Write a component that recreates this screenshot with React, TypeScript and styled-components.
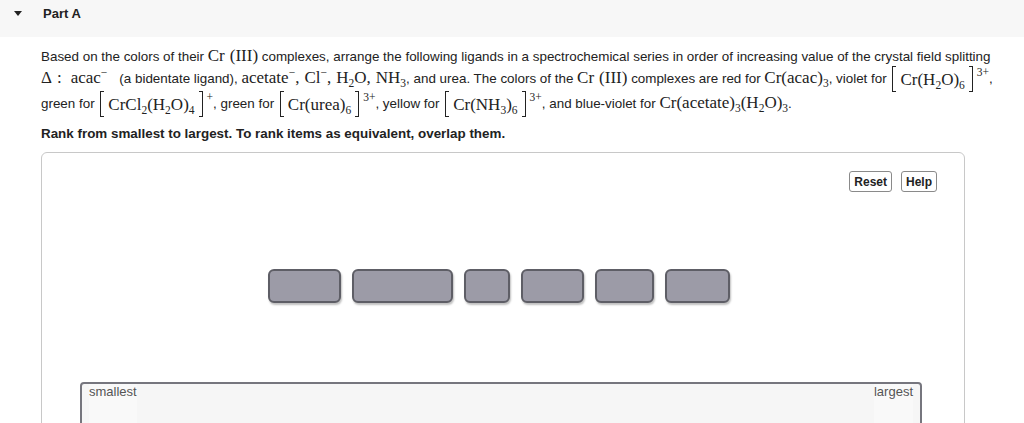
import styled, { createGlobalStyle } from 'styled-components';

const GlobalStyle = createGlobalStyle`
  body {
    margin: 0;
    background: #fff;
    font-family: "Liberation Sans", Arial, sans-serif;
    color: #222;
  }
`;

const Page = styled.div`
  width: 1024px;
  height: 423px;
  overflow: hidden;
`;

const PartHeader = styled.div`
  height: 37px;
  background: #f7f7f7;
  display: flex;
  align-items: center;
  padding-left: 14px;
  padding-bottom: 10px;
  box-sizing: border-box;
`;

const Caret = styled.span`
  width: 0;
  height: 0;
  border-left: 4px solid transparent;
  border-right: 4px solid transparent;
  border-top: 5px solid #222;
  margin-right: 21px;
`;

const PartTitle = styled.span`
  font-weight: bold;
  font-size: 13px;
`;

const Body = styled.div`
  padding: 9px 0 0 41px;
`;

const Prompt = styled.div`
  font-size: 13.4px;
`;

const Line = styled.div<{ $h: number }>`
  white-space: nowrap;
  height: ${(p) => p.$h}px;
  line-height: ${(p) => p.$h}px;
`;

const Math = styled.span`
  font-family: "Liberation Serif", "Times New Roman", serif;
  font-size: 17px;
`;

const Gap = styled.span<{ $w?: number }>`
  display: inline-block;
  width: ${(p) => p.$w ?? 5}px;
`;

const Sub = styled.span`
  font-size: 11.5px;
  position: relative;
  top: 4px;
`;

const Sup = styled.span`
  font-size: 11.5px;
  position: relative;
  top: -7px;
`;

const Formula = styled.span`
  display: inline-flex;
  align-items: center;
  vertical-align: middle;
  line-height: 1;
  height: 25px;
`;

const BigSup = styled.span`
  font-size: 11.5px;
  align-self: flex-start;
  margin-top: 0;
  margin-left: 2px;
`;

const Bracket = styled.span<{ $side: 'left' | 'right' }>`
  display: inline-block;
  width: 3px;
  height: 24px;
  border: 1px solid #222;
  ${(p) =>
    p.$side === 'left'
      ? 'border-right: none; margin: 0 4px 0 2px;'
      : 'border-left: none; margin: 0 2px 0 4px;'}
`;

const Instruction = styled.div`
  font-weight: bold;
  font-size: 13.4px;
  margin-top: 10px;
`;

const Board = styled.div`
  margin-top: 11px;
  width: 924px;
  height: 300px;
  border: 1px solid #c8c8c8;
  border-radius: 6px;
  box-sizing: border-box;
  padding: 18px 27px 0 38px;
`;

const Toolbar = styled.div`
  display: flex;
  justify-content: flex-end;
  gap: 9px;
`;

const ToolButton = styled.button`
  font-family: "Liberation Sans", Arial, sans-serif;
  font-weight: bold;
  font-size: 12px;
  color: #222;
  background: #fff;
  border: 1px solid #8a8a8a;
  border-radius: 3px;
  height: 21px;
  padding: 0 4px;
`;

const Pool = styled.div`
  display: flex;
  justify-content: center;
  gap: 11px;
  margin-top: 77px;
  padding-right: 19px;
`;

const Tile = styled.div<{ $w: number }>`
  width: ${(p) => p.$w}px;
  height: 34px;
  box-sizing: border-box;
  background: #9c9ba7;
  border: 2px solid #5e5e66;
  border-radius: 6px;
  box-shadow: 1px 2px 2px rgba(0, 0, 0, 0.25);
`;

const RankArea = styled.div`
  margin-top: 79px;
  width: 842px;
  height: 60px;
  box-sizing: border-box;
  background: #f6f6f6;
  border: 2px solid #76767e;
  border-radius: 4px;
  display: flex;
  justify-content: space-between;
  padding: 0 7px;
`;

const RankLabel = styled.span`
  font-size: 13px;
  color: #555;
  line-height: 16px;
  background: #f9f9f9;
`;

const tiles = [73, 101, 46, 63, 59, 65];

function Complex({
  inner,
  charge,
}: {
  inner: React.ReactNode;
  charge: string;
}) {
  return (
    <Math>
      <Formula>
        <Bracket $side="left" />
        <span>{inner}</span>
        <Bracket $side="right" />
        <BigSup>{charge}</BigSup>
      </Formula>
    </Math>
  );
}

export default function App() {
  return (
    <Page>
      <GlobalStyle />
      <PartHeader>
        <Caret />
        <PartTitle>Part A</PartTitle>
      </PartHeader>
      <Body>
        <Prompt>
          <Line $h={20}>
            Based on the colors of their{' '}
            <Math>
              Cr<Gap />(III)
            </Math>{' '}
            complexes, arrange the following ligands in a spectrochemical series in order of
            increasing value of the crystal field splitting
          </Line>
          <Line $h={24}>
            <Math>
              Δ<Gap />:<Gap $w={9} />
              acac<Sup>−</Sup>
            </Math>
            <Gap $w={12} />
            (a bidentate ligand),{' '}
            <Math>
              acetate<Sup>−</Sup>,<Gap $w={5} />Cl<Sup>−</Sup>,<Gap $w={5} />H<Sub>2</Sub>O,
              <Gap $w={5} />
              NH<Sub>3</Sub>
            </Math>
            , and urea. The colors of the{' '}
            <Math>
              Cr<Gap />(III)
            </Math>{' '}
            complexes are red for{' '}
            <Math>
              Cr(acac)<Sub>3</Sub>
            </Math>
            , violet for{' '}
            <Complex
              inner={
                <>
                  Cr(H<Sub>2</Sub>O)<Sub>6</Sub>
                </>
              }
              charge="3+"
            />
            ,
          </Line>
          <Line $h={26}>
            green for{' '}
            <Complex
              inner={
                <>
                  CrCl<Sub>2</Sub>(H<Sub>2</Sub>O)<Sub>4</Sub>
                </>
              }
              charge="+"
            />
            , green for{' '}
            <Complex
              inner={
                <>
                  Cr(urea)<Sub>6</Sub>
                </>
              }
              charge="3+"
            />
            , yellow for{' '}
            <Complex
              inner={
                <>
                  Cr(NH<Sub>3</Sub>)<Sub>6</Sub>
                </>
              }
              charge="3+"
            />
            , and blue-violet for{' '}
            <Math>
              Cr(acetate)<Sub>3</Sub>(H<Sub>2</Sub>O)<Sub>3</Sub>
            </Math>
            .
          </Line>
        </Prompt>
        <Instruction>Rank from smallest to largest. To rank items as equivalent, overlap them.</Instruction>
        <Board>
          <Toolbar>
            <ToolButton>Reset</ToolButton>
            <ToolButton>Help</ToolButton>
          </Toolbar>
          <Pool>
            {tiles.map((w, i) => (
              <Tile key={i} $w={w} />
            ))}
          </Pool>
          <RankArea>
            <RankLabel>smallest</RankLabel>
            <RankLabel>largest</RankLabel>
          </RankArea>
        </Board>
      </Body>
    </Page>
  );
}
